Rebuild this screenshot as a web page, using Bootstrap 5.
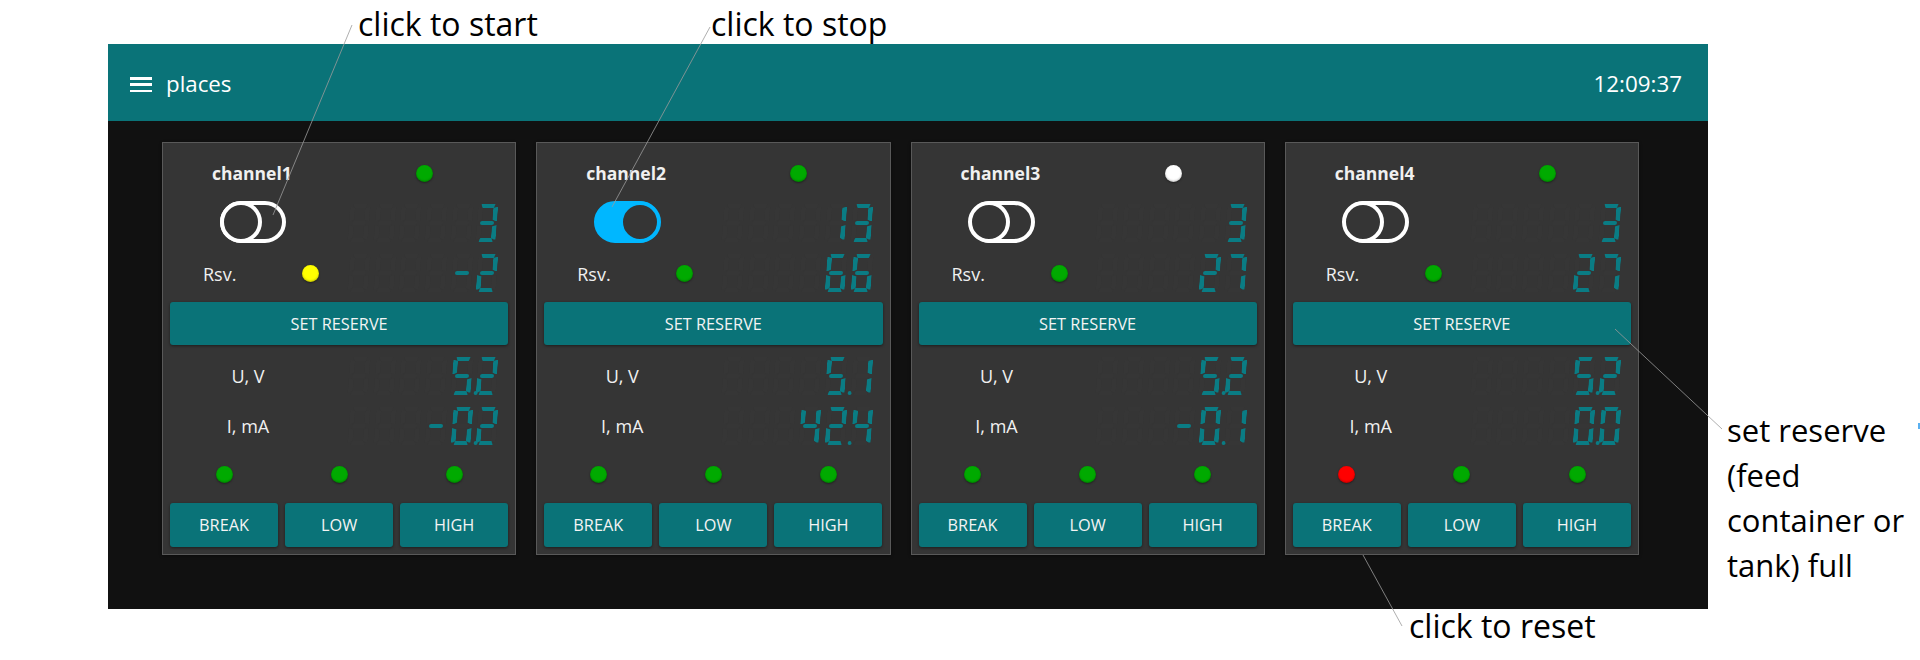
<!DOCTYPE html>
<html lang="en">
<head>
<meta charset="utf-8">
<title>places</title>
<link href="https://cdn.jsdelivr.net/npm/bootstrap@5.3.0/dist/css/bootstrap.min.css" rel="stylesheet">
<style>
html,body{height:660px;overflow:hidden}
body{background:#fff;font-family:"Open Sans","Noto Sans",sans-serif;position:relative}
.app-frame{margin:44px 0 0 108px;width:1600px;background:#111;height:565px}
.app-bar{height:77px;background:#0a7378;color:#fff;padding:2px 26px 0 22px}
.app-title{font-size:22.3px;margin-left:14px}
.app-clock{font-size:22.4px}
.burger{width:22px;height:15px;flex-direction:column;justify-content:space-between;margin-top:2px}
.burger i{display:block;height:2.5px;background:#fff}
.deck{padding:21px 69px 0 54px;gap:20px}
.chan{flex:1 1 0;height:413px;background:#353535;border:1px solid #595959;padding:8px 7px;color:#f0f0f0;box-shadow:0 1px 3px rgba(0,0,0,.4)}
.r-head{height:47px;padding:0 0 3px 42px}
.chan-name{width:204px;font-size:17.5px;font-weight:700;padding-top:1px}
.r-lcd{height:50px}
.r-lcd .lcd{margin-left:auto;margin-right:11px}
.lbl{font-size:18px}
.lbl-rsv{width:132px;padding-left:33px;padding-top:2px}
.lbl-mid{width:156px;text-align:center}
.led{width:17px;height:17px;border-radius:50%;flex:none;box-shadow:inset 0 -1px 2px rgba(0,0,0,.25),0 1px 2px rgba(0,0,0,.4)}
.led-g{background:#0a0}
.led-y{background:#ff0}
.led-w{background:#fff}
.led-r{background:#f00}
.sw{width:66px;height:42px;margin:0 0 2px 50px;border:4.5px solid #fff;border-radius:21px;position:relative}
.sw::after{content:"";position:absolute;left:-4.5px;top:-4.5px;width:42px;height:42px;border:4.5px solid #fff;border-radius:50%;background:#353535}
.sw-on{background:#00b7ff;border-color:#00b7ff}
.sw-on::after{left:auto;right:-4.5px;border-color:#00b7ff}
.act{background:#0a7378;border:0;border-radius:3px;color:#f4f4f4;font-size:16.3px;box-shadow:0 1px 3px rgba(0,0,0,.45);padding:1px 0 0;width:100%;display:block}
.act:hover,.act:focus{background:#0a7378;color:#f4f4f4}
.act-wide{height:43px;margin:4px 0 6px}
.r-leds{height:52px;padding-bottom:6px}
.led-cell{width:108px}
.r-btns{gap:7px}
.r-btns .act{height:44px;flex:1 1 0}
/* seven segment read-outs */
.lcd{display:flex;height:38px;position:relative;justify-content:flex-end}
.lcd-txt{position:absolute;right:0;top:0;font-size:26px;line-height:38px;color:transparent;white-space:nowrap}
.dg{display:block;width:20px;height:38px;margin-left:5.7px;position:relative;transform:skewX(-4.5deg)}
.sg{position:absolute;background:#0a7c84}
.sg-off{background:#363636}
.sg-a,.sg-d,.sg-g{left:2.5px;width:15px;height:4px}
.sg-a{top:0;clip-path:polygon(3% 0,97% 0,88% 100%,12% 100%)}
.sg-d{bottom:0;clip-path:polygon(12% 0,88% 0,97% 100%,3% 100%)}
.sg-g{top:17px;left:3px;width:14px;border-radius:2px}
.sg-b,.sg-c,.sg-e,.sg-f{width:5px;height:14.5px}
.sg-b,.sg-f{top:2.5px}.sg-c,.sg-e{top:21px}
.sg-b,.sg-c{right:0;clip-path:polygon(100% 0,100% 100%,60% 100%,0 90%,0 10%)}
.sg-e,.sg-f{left:0;clip-path:polygon(0 0,100% 10%,100% 90%,40% 100%,0 100%)}
.sg-p{width:3.8px;height:3.8px;border-radius:50%;right:-6.5px;bottom:0}
/* annotations */
.note{position:absolute;color:#000;font-size:32px;line-height:45px;white-space:nowrap}
.note-start{left:358px;top:1px}
.note-stop{left:711px;top:1px}
.note-reset{left:1409px;top:603px}
.note-full{left:1727px;top:408px;font-size:31px}
.leaders{position:absolute;left:0;top:0;pointer-events:none}
.leaders line{stroke:#9a9a9a;stroke-width:.8}
.tick{position:absolute;left:1918px;top:423px;width:2px;height:6px;background:#5ab0f0}
</style>
</head>
<body>
<div class="app-frame">
  <header class="app-bar d-flex align-items-center">
    <span class="burger d-flex"><i></i><i></i><i></i></span>
    <span class="app-title">places</span>
    <span class="app-clock ms-auto">12:09:37</span>
  </header>
  <main class="deck d-flex">

    <section class="chan">
      <div class="r-head d-flex align-items-center"><span class="chan-name">channel1</span><span class="led led-g"></span></div>
      <div class="r-lcd d-flex align-items-center"><span class="sw"></span><span class="lcd" data-v="3"></span></div>
      <div class="r-lcd d-flex align-items-center"><span class="lbl lbl-rsv">Rsv.</span><span class="led led-y"></span><span class="lcd" data-v="-2"></span></div>
      <button class="btn act act-wide">SET RESERVE</button>
      <div class="r-lcd d-flex align-items-center"><span class="lbl lbl-mid">U, V</span><span class="lcd" data-v="5.2"></span></div>
      <div class="r-lcd d-flex align-items-center"><span class="lbl lbl-mid">I, mA</span><span class="lcd" data-v="-0.2"></span></div>
      <div class="r-leds d-flex justify-content-between"><span class="led-cell d-flex align-items-center justify-content-center"><span class="led led-g"></span></span><span class="led-cell d-flex align-items-center justify-content-center"><span class="led led-g"></span></span><span class="led-cell d-flex align-items-center justify-content-center"><span class="led led-g"></span></span></div>
      <div class="r-btns d-flex"><button class="btn act">BREAK</button><button class="btn act">LOW</button><button class="btn act">HIGH</button></div>
    </section>

    <section class="chan">
      <div class="r-head d-flex align-items-center"><span class="chan-name">channel2</span><span class="led led-g"></span></div>
      <div class="r-lcd d-flex align-items-center"><span class="sw sw-on"></span><span class="lcd" data-v="13"></span></div>
      <div class="r-lcd d-flex align-items-center"><span class="lbl lbl-rsv">Rsv.</span><span class="led led-g"></span><span class="lcd" data-v="66"></span></div>
      <button class="btn act act-wide">SET RESERVE</button>
      <div class="r-lcd d-flex align-items-center"><span class="lbl lbl-mid">U, V</span><span class="lcd" data-v="5.1"></span></div>
      <div class="r-lcd d-flex align-items-center"><span class="lbl lbl-mid">I, mA</span><span class="lcd" data-v="42.4"></span></div>
      <div class="r-leds d-flex justify-content-between"><span class="led-cell d-flex align-items-center justify-content-center"><span class="led led-g"></span></span><span class="led-cell d-flex align-items-center justify-content-center"><span class="led led-g"></span></span><span class="led-cell d-flex align-items-center justify-content-center"><span class="led led-g"></span></span></div>
      <div class="r-btns d-flex"><button class="btn act">BREAK</button><button class="btn act">LOW</button><button class="btn act">HIGH</button></div>
    </section>

    <section class="chan">
      <div class="r-head d-flex align-items-center"><span class="chan-name">channel3</span><span class="led led-w"></span></div>
      <div class="r-lcd d-flex align-items-center"><span class="sw"></span><span class="lcd" data-v="3"></span></div>
      <div class="r-lcd d-flex align-items-center"><span class="lbl lbl-rsv">Rsv.</span><span class="led led-g"></span><span class="lcd" data-v="27"></span></div>
      <button class="btn act act-wide">SET RESERVE</button>
      <div class="r-lcd d-flex align-items-center"><span class="lbl lbl-mid">U, V</span><span class="lcd" data-v="5.2"></span></div>
      <div class="r-lcd d-flex align-items-center"><span class="lbl lbl-mid">I, mA</span><span class="lcd" data-v="-0.1"></span></div>
      <div class="r-leds d-flex justify-content-between"><span class="led-cell d-flex align-items-center justify-content-center"><span class="led led-g"></span></span><span class="led-cell d-flex align-items-center justify-content-center"><span class="led led-g"></span></span><span class="led-cell d-flex align-items-center justify-content-center"><span class="led led-g"></span></span></div>
      <div class="r-btns d-flex"><button class="btn act">BREAK</button><button class="btn act">LOW</button><button class="btn act">HIGH</button></div>
    </section>

    <section class="chan">
      <div class="r-head d-flex align-items-center"><span class="chan-name">channel4</span><span class="led led-g"></span></div>
      <div class="r-lcd d-flex align-items-center"><span class="sw"></span><span class="lcd" data-v="3"></span></div>
      <div class="r-lcd d-flex align-items-center"><span class="lbl lbl-rsv">Rsv.</span><span class="led led-g"></span><span class="lcd" data-v="27"></span></div>
      <button class="btn act act-wide">SET RESERVE</button>
      <div class="r-lcd d-flex align-items-center"><span class="lbl lbl-mid">U, V</span><span class="lcd" data-v="5.2"></span></div>
      <div class="r-lcd d-flex align-items-center"><span class="lbl lbl-mid">I, mA</span><span class="lcd" data-v="0.0"></span></div>
      <div class="r-leds d-flex justify-content-between"><span class="led-cell d-flex align-items-center justify-content-center"><span class="led led-r"></span></span><span class="led-cell d-flex align-items-center justify-content-center"><span class="led led-g"></span></span><span class="led-cell d-flex align-items-center justify-content-center"><span class="led led-g"></span></span></div>
      <div class="r-btns d-flex"><button class="btn act">BREAK</button><button class="btn act">LOW</button><button class="btn act">HIGH</button></div>
    </section>
  </main>
</div>

<span class="note note-start">click to start</span>
<span class="note note-stop">click to stop</span>
<span class="note note-reset">click to reset</span>
<span class="note note-full">set reserve<br>(feed<br>container or<br>tank) full</span>
<span class="tick"></span>
<svg class="leaders" width="1920" height="660">
  <line x1="352" y1="25" x2="273" y2="215"/>
  <line x1="710" y1="27" x2="612" y2="207"/>
  <line x1="1615" y1="329" x2="1722" y2="429"/>
  <line x1="1363" y1="555" x2="1402" y2="626"/>
</svg>

<script src="https://cdn.jsdelivr.net/npm/bootstrap@5.3.0/dist/js/bootstrap.bundle.min.js"></script>
<script>
var MAP={'0':'abcdef','1':'bc','2':'abged','3':'abgcd','4':'fgbc','5':'afgcd','6':'afgedc','7':'abc','8':'abcdefg','9':'abcdfg','-':'g',' ':''};
document.querySelectorAll('.lcd').forEach(function(box){
  var v=box.dataset.v,chars=[];
  for(var i=0;i<v.length;i++){if(v[i]!=='.')chars.push({c:v[i],p:v[i+1]==='.'});}
  while(chars.length<6)chars.unshift({c:' ',p:false});
  var html='';
  chars.forEach(function(ch){
    html+='<span class="dg">';
    'abcdefg'.split('').forEach(function(s){
      html+='<span class="sg sg-'+s+(MAP[ch.c].indexOf(s)<0?' sg-off':'')+'"></span>';
    });
    if(ch.p)html+='<span class="sg sg-p"></span>';
    html+='</span>';
  });
  box.innerHTML=html+'<span class="lcd-txt">'+v+'</span>';
});
</script>
</body>
</html>
